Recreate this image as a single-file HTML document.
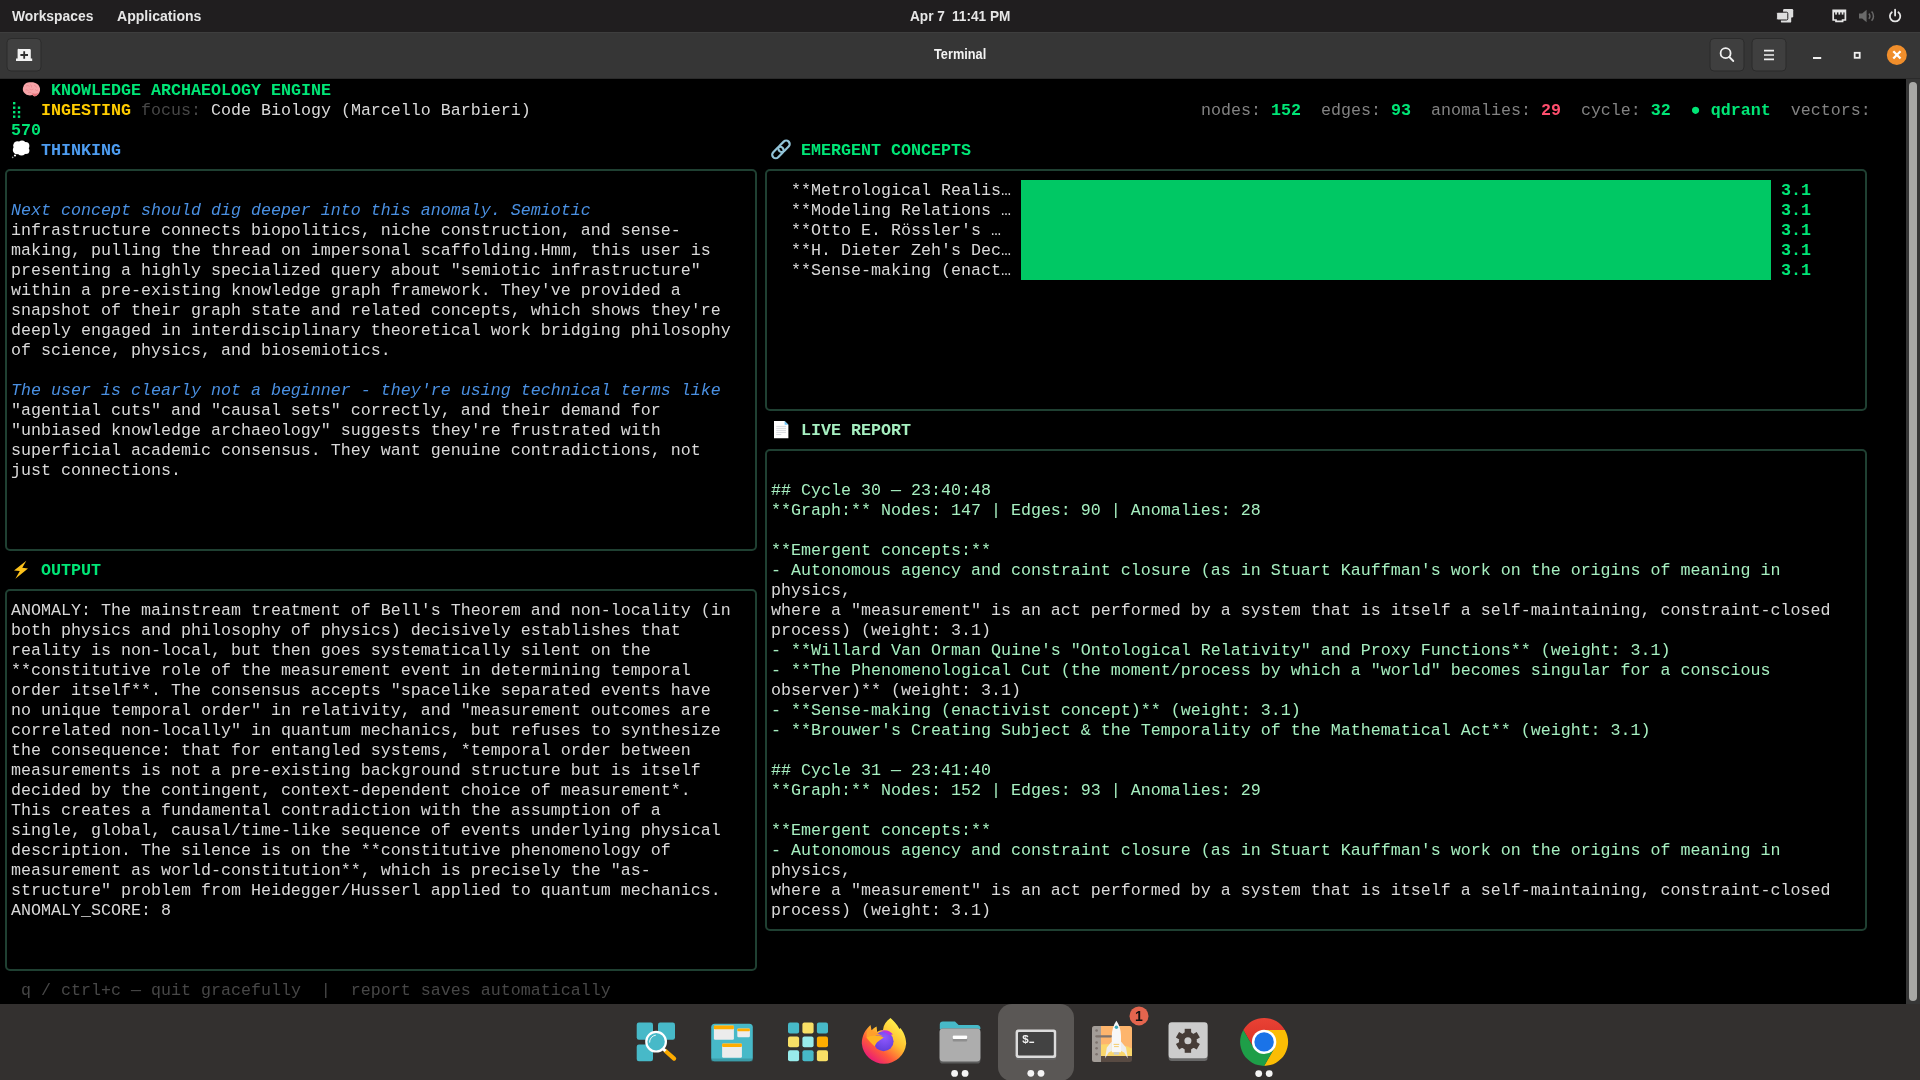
<!DOCTYPE html>
<html><head><meta charset="utf-8"><style>
html,body{margin:0;padding:0}
body{width:1920px;height:1080px;overflow:hidden;position:relative;background:#000;font-family:"Liberation Sans",sans-serif}
#top{will-change:transform;position:absolute;left:0;top:0;width:1920px;height:32px;background:#201e1f}
#hdr{will-change:transform;position:absolute;left:0;top:32px;width:1920px;height:47px;background:#363636}
#term{position:absolute;left:0;top:79px;width:1906px;height:925px;background:#000}
#term .t,.t{position:absolute;white-space:pre;font-family:"Liberation Mono",monospace;font-size:16.667px;line-height:20px;height:20px}
.bx{position:absolute;box-sizing:border-box;border:2px solid #1f4032;border-radius:5px}
#sb{position:absolute;left:1906px;top:79px;width:14px;height:925px;background:#363636}
#thumb{position:absolute;left:1909px;top:82px;width:8px;height:919px;background:#a8a8a6;border-radius:4px}
#dock{position:absolute;left:0;top:1004px;width:1920px;height:76px;background:#33302f}
.tb{position:absolute;color:#e6e6e6;font-weight:bold;font-size:14.5px;line-height:20px;transform-origin:0 0;white-space:pre}
</style></head><body>
<div id="top">
<div class="tb" style="left:12px;top:5.5px;transform:scaleX(0.955)">Workspaces</div>
<div class="tb" style="left:117px;top:5.5px;transform:scaleX(0.97)">Applications</div>
<div class="tb" style="left:910px;top:5.5px;transform:scaleX(0.94)">Apr 7</div>
<div class="tb" style="left:951.8px;top:5.5px;transform:scaleX(0.94)">11:41 PM</div>
</div>
<div id="hdr"><div style="position:absolute;left:0;top:0;width:1920px;height:1px;background:#3e3e3e"></div><div style="position:absolute;left:0;top:46px;width:1920px;height:1px;background:#2b2b2b"></div>
<div class="tb" style="left:934px;top:11.5px;transform:scaleX(0.88);color:#f4f4f4">Terminal</div>
</div>
<div id="term"></div>
<div id="tl" style="position:absolute;left:0;top:0;width:1920px;height:1080px;will-change:transform"><div class="t" style="top:81px;left:51px;"><span style="font-weight:bold;color:#00e676">KNOWLEDGE ARCHAEOLOGY ENGINE</span></div>
<div class="t" style="top:101px;left:41px;"><span style="font-weight:bold;color:#ffcc00">INGESTING</span> <span style="color:#474747">focus:</span><span style="color:#d9d9d9"> Code Biology (Marcello Barbieri)</span></div>
<div class="t" style="top:101px;left:1201px;"><span style="color:#828282">nodes: </span><span style="font-weight:bold;color:#00e676">152</span><span style="color:#828282">  edges: </span><span style="font-weight:bold;color:#00e676">93</span><span style="color:#828282">  anomalies: </span><span style="font-weight:bold;color:#ff4f6e">29</span><span style="color:#828282">  cycle: </span><span style="font-weight:bold;color:#00e676">32</span>  <span style="font-weight:bold;color:#00e676">● qdrant</span><span style="color:#828282">  vectors:</span></div>
<div class="t" style="top:121px;left:11px;"><span style="font-weight:bold;color:#00e676">570</span></div>
<div class="t" style="top:141px;left:41px;"><span style="font-weight:bold;color:#4d9cf0">THINKING</span></div>
<div class="t" style="top:141px;left:801px;"><span style="font-weight:bold;color:#00e676">EMERGENT CONCEPTS</span></div>
<div class="t" style="top:561px;left:41px;"><span style="font-weight:bold;color:#00e676">OUTPUT</span></div>
<div class="t" style="top:421px;left:801px;"><span style="font-weight:bold;color:#a6efc0">LIVE REPORT</span></div>
<div class="bx" style="left:5px;top:169px;width:752px;height:382px"></div>
<div class="bx" style="left:5px;top:589px;width:752px;height:382px"></div>
<div class="bx" style="left:765px;top:169px;width:1102px;height:242px"></div>
<div class="bx" style="left:765px;top:449px;width:1102px;height:482px"></div>
<div class="t" style="top:201px;left:11px;"><span style="font-style:italic;color:#4a90e2">Next concept should dig deeper into this anomaly. Semiotic</span></div>
<div class="t" style="top:221px;left:11px;"><span style="color:#d9d9d9">infrastructure connects biopolitics, niche construction, and sense-</span></div>
<div class="t" style="top:241px;left:11px;"><span style="color:#d9d9d9">making, pulling the thread on impersonal scaffolding.Hmm, this user is</span></div>
<div class="t" style="top:261px;left:11px;"><span style="color:#d9d9d9">presenting a highly specialized query about "semiotic infrastructure"</span></div>
<div class="t" style="top:281px;left:11px;"><span style="color:#d9d9d9">within a pre-existing knowledge graph framework. They've provided a</span></div>
<div class="t" style="top:301px;left:11px;"><span style="color:#d9d9d9">snapshot of their graph state and related concepts, which shows they're</span></div>
<div class="t" style="top:321px;left:11px;"><span style="color:#d9d9d9">deeply engaged in interdisciplinary theoretical work bridging philosophy</span></div>
<div class="t" style="top:341px;left:11px;"><span style="color:#d9d9d9">of science, physics, and biosemiotics.</span></div>
<div class="t" style="top:381px;left:11px;"><span style="font-style:italic;color:#4a90e2">The user is clearly not a beginner - they're using technical terms like</span></div>
<div class="t" style="top:401px;left:11px;"><span style="color:#d9d9d9">"agential cuts" and "causal sets" correctly, and their demand for</span></div>
<div class="t" style="top:421px;left:11px;"><span style="color:#d9d9d9">"unbiased knowledge archaeology" suggests they're frustrated with</span></div>
<div class="t" style="top:441px;left:11px;"><span style="color:#d9d9d9">superficial academic consensus. They want genuine contradictions, not</span></div>
<div class="t" style="top:461px;left:11px;"><span style="color:#d9d9d9">just connections.</span></div>
<div class="t" style="top:601px;left:11px;"><span style="color:#d9d9d9">ANOMALY: The mainstream treatment of Bell's Theorem and non-locality (in</span></div>
<div class="t" style="top:621px;left:11px;"><span style="color:#d9d9d9">both physics and philosophy of physics) decisively establishes that</span></div>
<div class="t" style="top:641px;left:11px;"><span style="color:#d9d9d9">reality is non-local, but then goes systematically silent on the</span></div>
<div class="t" style="top:661px;left:11px;"><span style="color:#d9d9d9">**constitutive role of the measurement event in determining temporal</span></div>
<div class="t" style="top:681px;left:11px;"><span style="color:#d9d9d9">order itself**. The consensus accepts "spacelike separated events have</span></div>
<div class="t" style="top:701px;left:11px;"><span style="color:#d9d9d9">no unique temporal order" in relativity, and "measurement outcomes are</span></div>
<div class="t" style="top:721px;left:11px;"><span style="color:#d9d9d9">correlated non-locally" in quantum mechanics, but refuses to synthesize</span></div>
<div class="t" style="top:741px;left:11px;"><span style="color:#d9d9d9">the consequence: that for entangled systems, *temporal order between</span></div>
<div class="t" style="top:761px;left:11px;"><span style="color:#d9d9d9">measurements is not a pre-existing background structure but is itself</span></div>
<div class="t" style="top:781px;left:11px;"><span style="color:#d9d9d9">decided by the contingent, context-dependent choice of measurement*.</span></div>
<div class="t" style="top:801px;left:11px;"><span style="color:#d9d9d9">This creates a fundamental contradiction with the assumption of a</span></div>
<div class="t" style="top:821px;left:11px;"><span style="color:#d9d9d9">single, global, causal/time-like sequence of events underlying physical</span></div>
<div class="t" style="top:841px;left:11px;"><span style="color:#d9d9d9">description. The silence is on the **constitutive phenomenology of</span></div>
<div class="t" style="top:861px;left:11px;"><span style="color:#d9d9d9">measurement as world-constitution**, which is precisely the "as-</span></div>
<div class="t" style="top:881px;left:11px;"><span style="color:#d9d9d9">structure" problem from Heidegger/Husserl applied to quantum mechanics.</span></div>
<div class="t" style="top:901px;left:11px;"><span style="color:#d9d9d9">ANOMALY_SCORE: 8</span></div>
<div class="t" style="top:181px;left:791px;"><span style="color:#d9d9d9">**Metrological Realis…</span></div>
<div class="t" style="top:181px;left:1781px;"><span style="font-weight:bold;color:#00e676">3.1</span></div>
<div class="t" style="top:201px;left:791px;"><span style="color:#d9d9d9">**Modeling Relations …</span></div>
<div class="t" style="top:201px;left:1781px;"><span style="font-weight:bold;color:#00e676">3.1</span></div>
<div class="t" style="top:221px;left:791px;"><span style="color:#d9d9d9">**Otto E. Rössler's …</span></div>
<div class="t" style="top:221px;left:1781px;"><span style="font-weight:bold;color:#00e676">3.1</span></div>
<div class="t" style="top:241px;left:791px;"><span style="color:#d9d9d9">**H. Dieter Zeh's Dec…</span></div>
<div class="t" style="top:241px;left:1781px;"><span style="font-weight:bold;color:#00e676">3.1</span></div>
<div class="t" style="top:261px;left:791px;"><span style="color:#d9d9d9">**Sense-making (enact…</span></div>
<div class="t" style="top:261px;left:1781px;"><span style="font-weight:bold;color:#00e676">3.1</span></div>
<div style="position:absolute;left:1021px;top:180px;width:750px;height:100px;background:#00c864"></div>
<div class="t" style="top:481px;left:771px;"><span style="color:#a6efc0">## Cycle 30 — 23:40:48</span></div>
<div class="t" style="top:501px;left:771px;"><span style="color:#a6efc0">**Graph:** Nodes: 147 | Edges: 90 | Anomalies: 28</span></div>
<div class="t" style="top:541px;left:771px;"><span style="color:#a6efc0">**Emergent concepts:**</span></div>
<div class="t" style="top:561px;left:771px;"><span style="color:#a6efc0">- Autonomous agency and constraint closure (as in Stuart Kauffman's work on the origins of meaning in</span></div>
<div class="t" style="top:581px;left:771px;"><span style="color:#d9d9d9">physics,</span></div>
<div class="t" style="top:601px;left:771px;"><span style="color:#d9d9d9">where a "measurement" is an act performed by a system that is itself a self-maintaining, constraint-closed</span></div>
<div class="t" style="top:621px;left:771px;"><span style="color:#d9d9d9">process) (weight: 3.1)</span></div>
<div class="t" style="top:641px;left:771px;"><span style="color:#a6efc0">- **Willard Van Orman Quine's "Ontological Relativity" and Proxy Functions** (weight: 3.1)</span></div>
<div class="t" style="top:661px;left:771px;"><span style="color:#a6efc0">- **The Phenomenological Cut (the moment/process by which a "world" becomes singular for a conscious</span></div>
<div class="t" style="top:681px;left:771px;"><span style="color:#d9d9d9">observer)** (weight: 3.1)</span></div>
<div class="t" style="top:701px;left:771px;"><span style="color:#a6efc0">- **Sense-making (enactivist concept)** (weight: 3.1)</span></div>
<div class="t" style="top:721px;left:771px;"><span style="color:#a6efc0">- **Brouwer's Creating Subject &amp; the Temporality of the Mathematical Act** (weight: 3.1)</span></div>
<div class="t" style="top:761px;left:771px;"><span style="color:#a6efc0">## Cycle 31 — 23:41:40</span></div>
<div class="t" style="top:781px;left:771px;"><span style="color:#a6efc0">**Graph:** Nodes: 152 | Edges: 93 | Anomalies: 29</span></div>
<div class="t" style="top:821px;left:771px;"><span style="color:#a6efc0">**Emergent concepts:**</span></div>
<div class="t" style="top:841px;left:771px;"><span style="color:#a6efc0">- Autonomous agency and constraint closure (as in Stuart Kauffman's work on the origins of meaning in</span></div>
<div class="t" style="top:861px;left:771px;"><span style="color:#d9d9d9">physics,</span></div>
<div class="t" style="top:881px;left:771px;"><span style="color:#d9d9d9">where a "measurement" is an act performed by a system that is itself a self-maintaining, constraint-closed</span></div>
<div class="t" style="top:901px;left:771px;"><span style="color:#d9d9d9">process) (weight: 3.1)</span></div>
<div class="t" style="top:981px;left:21px;"><span style="color:#474747">q / ctrl+c — quit gracefully  |  report saves automatically</span></div></div>
<div id="sb"></div><div id="thumb"></div>
<div id="dock"></div>
<svg width="1920" height="1080" viewBox="0 0 1920 1080" style="position:absolute;left:0;top:0;will-change:transform">
<g fill="#dedede">
 <rect x="1783.1" y="9.1" width="10.1" height="8.4" rx="1.2"/>
 <rect x="1780.9" y="16.3" width="10.3" height="6.3" rx="1.2"/>
 <rect x="1776.6" y="12.2" width="11.2" height="7.8" rx="1.3" stroke="#201e1f" stroke-width="1"/>
</g>
<g>
 <path d="M1833.2 10.4h12.2v9.6h-2.8v1.4h-6.6v-1.4h-2.8z" fill="none" stroke="#e6e6e6" stroke-width="1.7" stroke-linejoin="miter"/>
 <rect x="1833" y="10" width="12.6" height="2.4" fill="#e6e6e6"/>
 <rect x="1835.2" y="11" width="1.7" height="3.6" fill="#e6e6e6"/>
 <rect x="1838.45" y="11" width="1.7" height="3.6" fill="#e6e6e6"/>
 <rect x="1841.7" y="11" width="1.7" height="3.6" fill="#e6e6e6"/>
</g>
<g fill="#6a6a6a">
 <path d="M1859 13.5h3.2l4.4-3.8v12.6l-4.4-3.8h-3.2z"/>
 <path d="M1868.8 13.6a3.6 3.6 0 0 1 0 5.2" fill="none" stroke="#6a6a6a" stroke-width="1.5"/>
 <path d="M1871.6 11.6a6.6 6.6 0 0 1 0 9.2" fill="none" stroke="#6a6a6a" stroke-width="1.5"/>
</g>
<g fill="none" stroke="#e6e6e6" stroke-width="1.8" stroke-linecap="round">
 <path d="M1891.8 12.2a5.2 5.2 0 1 0 6.6 0"/>
 <path d="M1895.1 9.7v5.8"/>
</g>

<rect x="7" y="38.5" width="34" height="32.5" rx="4" fill="#404040" stroke="#2b2b2b" stroke-width="1"/>
<path d="M19 48.9h10.6a1.2 1.2 0 0 1 1.2 1.2v8.4h1.4v2.6h-16.2v-2.6h1.6v-8.4a1.2 1.2 0 0 1 1.4-1.2z" fill="#f2f2f2"/>
<path d="M24.2 51.2v7.6 M20.4 55h7.6" stroke="#2f2f2f" stroke-width="1.8"/>
<rect x="1710" y="38.5" width="34" height="32.5" rx="4" fill="#3f3f3f" stroke="#2b2b2b" stroke-width="1"/>
<rect x="1752" y="38.5" width="34" height="32.5" rx="4" fill="#3f3f3f" stroke="#2b2b2b" stroke-width="1"/>
<circle cx="1725.6" cy="53.2" r="5" fill="none" stroke="#f0f0f0" stroke-width="1.8"/>
<path d="M1729.3 57l4 4" stroke="#f0f0f0" stroke-width="1.8" stroke-linecap="round"/>
<path d="M1764 50.6h10 M1764 55h10 M1764 59.4h10" stroke="#f0f0f0" stroke-width="1.7"/>
<rect x="1813" y="57" width="8.2" height="2" fill="#f0f0f0"/>
<rect x="1854.7" y="52.8" width="5" height="5" fill="none" stroke="#f0f0f0" stroke-width="1.8"/>
<circle cx="1896.8" cy="55" r="10" fill="#f08e2b"/>
<path d="M1893.3 51.3l7.2 7.2 M1900.5 51.3l-7.2 7.2" stroke="#ffffff" stroke-width="2.3" stroke-linecap="butt"/>

<g>
 <path d="M23.5 86.5 C24 83.5 27.5 82 31 82.2 C35.5 82 39.5 84.5 40 88.5 C40.4 91.5 39 94 36.8 95.6 C35.5 96.6 33.5 96.4 32.6 95 C30.5 95.8 27.5 95.6 25.6 94 C23.2 92.3 22 89.5 23.5 86.5z" fill="#f7a4a8"/>
 <path d="M32.6 95 C33.5 96.4 35.5 96.6 36.8 95.6 C38 94.6 38.6 93.6 38.4 93 C36.5 93.8 34.2 93.8 32.2 93.2z" fill="#e7747b"/>
 <g fill="none" stroke="#e9838a" stroke-width="0.8" opacity="0.85">
  <path d="M26 86 q2 -1.5 3.5 0.5 M30 84.5 q2.5 1 1.5 3 M34 85 q2 0.5 2.5 2.5 M25.5 90 q2 -1 3 1 M29.5 89 q2 1.5 4 0 M35 89.5 q1.5 1.5 3 0.5 M28 92.5 q2 -1 3.5 0.5"/>
 </g>
</g>
<g fill="#00e676">
 <rect x="13" y="102" width="2.4" height="2.4"/><rect x="13" y="106.5" width="2.4" height="2.4"/><rect x="13" y="111" width="2.4" height="2.4"/><rect x="13" y="115.5" width="2.4" height="2.4"/>
 <rect x="17.8" y="106.5" width="2.4" height="2.4"/><rect x="17.8" y="111" width="2.4" height="2.4"/><rect x="17.8" y="115.5" width="2.4" height="2.4"/>
</g>
<g fill="#ffffff">
 <circle cx="17.5" cy="145.5" r="4.3"/><circle cx="22" cy="144" r="3.4"/><circle cx="25.6" cy="145.8" r="3.8"/>
 <circle cx="17" cy="150" r="4.2"/><circle cx="21.5" cy="151.5" r="4"/><circle cx="25.8" cy="150.5" r="3.6"/><circle cx="21" cy="148" r="4.5"/>
 <circle cx="15" cy="155.5" r="1.1"/><circle cx="12.7" cy="157.4" r="0.8" opacity="0.6"/>
</g>
<g fill="none" stroke="#92c4d8" stroke-width="2.2">
 <rect x="-6.6" y="-3.5" width="13.2" height="7" rx="3.5" transform="translate(784 146.3) rotate(-45)"/>
 <rect x="-6.6" y="-3.5" width="13.2" height="7" rx="3.5" transform="translate(777.9 152.5) rotate(-45)"/>
</g>
<path d="M26.3 560.8 L14 570.4 L19.8 570.9 L15.4 578.8 L28 568.4 L22.3 567.8 Z" fill="#fcc21b"/>
<g>
 <path d="M774 421h10.6l3.8 3.8v13.4h-14.4z" fill="#ffffff"/>
 <path d="M784.6 421l3.8 3.8h-3.8z" fill="#6cc4f8"/>
 <path d="M776.3 426.4h9.8 M776.3 428.4h9.8 M776.3 430.4h9.8 M776.3 432.4h9.8 M776.3 434.5h5" stroke="#d2d6da" stroke-width="0.9"/>
</g>

<rect x="998" y="1004" width="76" height="77" rx="14" fill="#5a5755"/>
<g>
 <rect x="636.7" y="1022.6" width="16.3" height="17.2" rx="2.2" fill="#47b9c8"/>
 <rect x="658" y="1022.6" width="17" height="17.2" rx="2.2" fill="#47b9c8"/>
 <rect x="636.7" y="1044.5" width="16.3" height="16.7" rx="2.2" fill="#47b9c8"/>
 <path d="M665.5 1051l8.6 7.6" stroke="#fdab00" stroke-width="4.2" stroke-linecap="round"/>
 <path d="M662.5 1048.3l3 2.7" stroke="#ffffff" stroke-width="3"/>
 <circle cx="656.1" cy="1041.7" r="9.8" fill="#47b9c8" stroke="#ffffff" stroke-width="2.2"/>
 <path d="M649.6 1042.6a7 7 0 0 1 6.2 -7.4" fill="none" stroke="#ffffff" stroke-width="0.9"/>
</g>
<g>
 <rect x="711.2" y="1023.8" width="41.6" height="37.5" rx="3.5" fill="#47b9c8"/>
 <rect x="711.2" y="1058.5" width="41.6" height="3" rx="1" fill="#2f7f8a" opacity="0.5"/>
 <rect x="713.9" y="1025.6" width="20" height="14.2" rx="1.3" fill="#ececec"/><rect x="713.9" y="1025.6" width="20" height="3.6" rx="1" fill="#ffad00"/>
 <rect x="737.3" y="1028.4" width="12.6" height="8.9" rx="1.2" fill="#ececec"/><rect x="737.3" y="1028.4" width="12.6" height="2.8" rx="1" fill="#ffad00"/>
 <rect x="722.1" y="1043.4" width="19.8" height="14.4" rx="1.3" fill="#ececec"/><rect x="722.1" y="1043.4" width="19.8" height="3.6" rx="1" fill="#ffad00"/>
</g>
<g>
 <rect x="788" y="1022.6" width="11.1" height="10.8" rx="2" fill="#47b9c8"/>
 <rect x="802.4" y="1022.6" width="11.2" height="10.8" rx="2" fill="#f8df66"/>
 <rect x="816.9" y="1022.6" width="11.1" height="10.8" rx="2" fill="#47b9c8"/>
 <rect x="788" y="1036.4" width="11.1" height="10.9" rx="2" fill="#f8df66"/>
 <rect x="802.4" y="1036.4" width="11.2" height="10.9" rx="2" fill="#98ebeb"/>
 <rect x="816.9" y="1036.4" width="11.1" height="10.9" rx="2" fill="#ffad00"/>
 <rect x="788" y="1050.3" width="11.1" height="10.9" rx="2" fill="#98ebeb"/>
 <rect x="802.4" y="1050.3" width="11.2" height="10.9" rx="2" fill="#47b9c8"/>
 <rect x="816.9" y="1050.3" width="11.1" height="10.9" rx="2" fill="#f8df66"/>
</g>
<defs>
 <linearGradient id="ffo" x1="0.85" y1="0.1" x2="0.2" y2="0.95"><stop offset="0" stop-color="#fff44f"/><stop offset="0.4" stop-color="#ffbd2e"/><stop offset="0.7" stop-color="#ff5a3a"/><stop offset="1" stop-color="#e8157d"/></linearGradient>
 <radialGradient id="ffp" cx="0.55" cy="0.3" r="0.8"><stop offset="0" stop-color="#9059ff"/><stop offset="1" stop-color="#5b3ad6"/></radialGradient>
 <linearGradient id="chr" x1="0" y1="0" x2="0" y2="1"><stop offset="0" stop-color="#e94235"/><stop offset="1" stop-color="#d93025"/></linearGradient>
</defs>
<g>
 <path d="M870.5 1025 C865 1030 861.8 1036 861.8 1043.6 A22.3 22.3 0 0 0 906.2 1043.6 C906 1036 903 1031 900.3 1027.9 L899.5 1029 C897 1024 893 1020 890.5 1017.9 C886 1021 883.5 1025 883.1 1029.4 L882.8 1030 C880 1030 878.5 1031 877.2 1032 L876.6 1026.4 C874 1027.5 872.5 1029 871.6 1030.6 Z" fill="url(#ffo)"/>
 <circle cx="883.6" cy="1041.3" r="10" fill="url(#ffp)"/>
 <path d="M880 1031 C886 1029 891 1031.5 893 1034.6 L888.5 1034.8 C886 1032.5 883 1031.8 880 1031z" fill="#b833e1"/>
 <path d="M866.5 1037.5 C870 1034.6 878 1034.4 883.7 1037.4 C880 1040.5 876.5 1041 874.8 1046.5 C871.5 1043.5 868.5 1040.5 866.5 1037.5z" fill="#ffb423"/>
 <path d="M868 1028 C872 1031 877 1033 883 1036 C877 1034.5 871 1035 866.5 1037.5 C866.5 1034 867 1031 868 1028z" fill="#ff9f2c"/>
</g>
<g>
 <path d="M939.8 1029 v-4.6 a3 3 0 0 1 3 -3 h12.2 l3.6 3.6 h18.2 a3 3 0 0 1 3.6 3 v1z" fill="#47b9c8"/>
 <rect x="939.6" y="1028.6" width="40.8" height="35" rx="3.4" fill="#5b5b5b"/>
 <rect x="939.6" y="1028.6" width="40.8" height="32.9" rx="3.4" fill="#adadad"/>
 <rect x="952.7" y="1035.6" width="14.5" height="6" rx="1" fill="#8e8e8e"/>
 <rect x="952.7" y="1035.6" width="14.5" height="3.4" rx="1" fill="#ffffff"/>
</g>
<g>
 <rect x="1015.6" y="1031" width="40.6" height="29" rx="2" fill="#616161"/>
 <rect x="1015.6" y="1029.6" width="40.6" height="28.4" rx="2.5" fill="#dcdcdc"/>
 <rect x="1018" y="1032" width="35.8" height="23.6" rx="1" fill="#424242"/>
 <text x="1022.3" y="1043" font-family="Liberation Sans" font-size="11.5" fill="#f0f0f0" font-weight="bold">$</text>
 <rect x="1029.3" y="1041.6" width="4.8" height="1.4" fill="#f0f0f0"/>
</g>
<g>
 <rect x="1092" y="1026" width="40" height="36" rx="2.5" fill="#584a42"/>
 <path d="M1101 1026 h28.5 a2.5 2.5 0 0 1 2.5 2.5 v27.5 h-31z" fill="#fdb56d"/>
 <path d="M1101 1044.5 c10 -1 20 -1 31 4 v7.5 h-31z" fill="#fad66b"/>
 <path d="M1094.5 1026 h6.5 v36 h-6.5 a2.5 2.5 0 0 1 -2.5 -2.5 v-31 a2.5 2.5 0 0 1 2.5 -2.5z" fill="#a39d98"/>
 <g fill="#7d736e"><circle cx="1096.6" cy="1030.5" r="1.3"/><circle cx="1096.6" cy="1042.5" r="1.3"/><circle cx="1096.6" cy="1048.3" r="1.3"/><circle cx="1096.6" cy="1054.2" r="1.3"/></g>
 <rect x="1095.2" y="1035.2" width="17" height="2.2" rx="1.1" fill="#7d736e"/>
 <path d="M1111.8 1041.5 L1106.8 1047.5 L1105 1058.6 L1108.6 1052.6 L1111.8 1051z" fill="#ededed"/>
 <path d="M1121 1041.5 L1126 1047.5 L1127.8 1058.6 L1124.2 1052.6 L1121 1051z" fill="#ededed"/>
 <path d="M1116.4 1020.8 C1113.5 1025 1111.8 1030 1111.8 1036 V1052.2 H1121 V1036 C1121 1030 1119.3 1025 1116.4 1020.8z" fill="#f7f7f7"/>
 <circle cx="1116.4" cy="1027.3" r="1.7" fill="#3aa6b8"/>
 <rect x="1113.8" y="1052.2" width="5.2" height="2.4" fill="#c8ccd2"/>
 <path d="M1113.6 1044.4h5.6 M1114 1046.6h4.8" stroke="#f2c14a" stroke-width="0.8"/>
 <circle cx="1139" cy="1015.9" r="9.5" fill="#e4654e"/>
 <text x="1139" y="1021" text-anchor="middle" font-family="Liberation Sans" font-weight="bold" font-size="14" fill="#111">1</text>
</g>
<g>
 <rect x="1168.6" y="1023" width="39" height="38" rx="3.2" fill="#686868"/>
 <rect x="1168.6" y="1022.2" width="39" height="36" rx="3.2" fill="#cccccc"/>
 <g transform="translate(1187.9 1040.8)" fill="#463c37">
  <circle r="9"/>
  <rect x="-3.2" y="-12" width="6.4" height="24"/>
  <rect x="-3.2" y="-12" width="6.4" height="24" transform="rotate(60)"/>
  <rect x="-3.2" y="-12" width="6.4" height="24" transform="rotate(120)"/>
 </g>
 <circle cx="1187.9" cy="1040.8" r="3.5" fill="#cccccc"/>
</g>
<g>
 <path d="M1243.32 1029.90 A24 24 0 0 1 1284.88 1029.90 L1264.10 1029.90 L1264.10 1041.90 L1253.71 1047.90 Z" fill="url(#chr)"/>
 <path d="M1284.88 1029.90 A24 24 0 0 1 1264.10 1065.90 L1274.49 1047.90 L1264.10 1041.90 L1264.10 1029.90 Z" fill="#fbbc04"/>
 <path d="M1264.10 1065.90 A24 24 0 0 1 1243.32 1029.90 L1253.71 1047.90 L1264.10 1041.90 L1274.49 1047.90 Z" fill="#1e9e48"/>
 <circle cx="1264.1" cy="1041.9" r="12.2" fill="#ffffff"/>
 <circle cx="1264.1" cy="1041.9" r="9.7" fill="#1a73e8"/>
</g>
<g fill="#f4f4f4">
 <circle cx="954.6" cy="1073.4" r="3.4"/><circle cx="965.1" cy="1073.4" r="3.4"/>
 <circle cx="1030.8" cy="1073.3" r="3.4"/><circle cx="1041" cy="1073.3" r="3.4"/>
 <circle cx="1258.7" cy="1073.6" r="3.4"/><circle cx="1269.2" cy="1073.6" r="3.4"/>
</g>
</svg>
</body></html>
